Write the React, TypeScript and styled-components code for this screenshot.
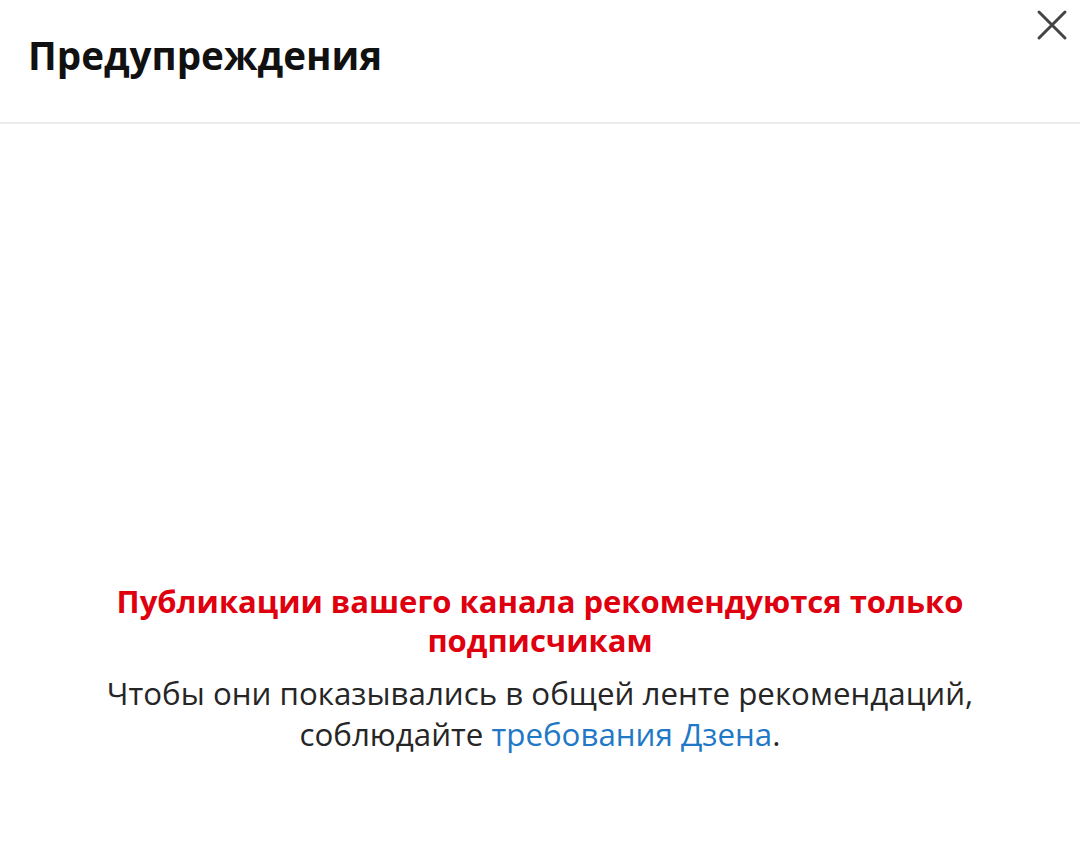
import * as React from 'react';
import styled, { createGlobalStyle } from 'styled-components';

const GlobalStyle = createGlobalStyle`
  html, body {
    margin: 0;
    padding: 0;
    background: #fff;
  }
  body {
    font-family: "Open Sans", "Noto Sans", sans-serif;
    -webkit-font-smoothing: antialiased;
  }
`;

const App = () => {
  return <Dialog>
    <GlobalStyle />
    <Header>
      <Title>Предупреждения</Title>
      <CloseButton aria-label="Закрыть">
        <svg width="32" height="32" viewBox="0 0 32 32">
          <path d="M3 3 L29 29 M29 3 L3 29" stroke="#444" strokeWidth="3" strokeLinecap="round" fill="none" />
        </svg>
      </CloseButton>
    </Header>
    <Body>
      <Message>
        <Warning>Публикации вашего канала рекомендуются только подписчикам</Warning>
        <Hint>
          Чтобы они показывались в общей ленте рекомендаций, соблюдайте{' '}
          <Link href="#">требования Дзена</Link>.
        </Hint>
      </Message>
    </Body>
  </Dialog>;
};

const Dialog = styled.div`
  width: 1080px;
  height: 866px;
  display: flex;
  flex-direction: column;
  background: #fff;
`;

const Header = styled.div`
  position: relative;
  height: 124px;
  flex: none;
  padding: 36px 28px 0 28px;
  box-sizing: border-box;
  border-bottom: 2px solid #ececec;
`;

const Title = styled.h1`
  margin: 0;
  font-size: 38.6px;
  line-height: 39px;
  font-weight: 700;
  color: #111;
`;

const CloseButton = styled.button`
  position: absolute;
  top: 9px;
  right: 12px;
  width: 32px;
  height: 32px;
  padding: 0;
  border: 0;
  background: none;
  cursor: pointer;
  display: flex;
`;

const Body = styled.div`
  flex: 1 1 auto;
  display: flex;
  justify-content: center;
  padding-top: 458px;
`;

const Message = styled.div`
  width: 890px;
  text-align: center;
  display: flex;
  flex-direction: column;
  gap: 13px;
`;

const Warning = styled.div`
  font-size: 31px;
  font-weight: 700;
  line-height: 39px;
  color: #de000e;
`;

const Hint = styled.div`
  font-size: 31.3px;
  font-weight: 400;
  line-height: 41px;
  color: #262626;
`;

const Link = styled.a`
  color: #2178c6;
  text-decoration: none;
`;

export default App;
